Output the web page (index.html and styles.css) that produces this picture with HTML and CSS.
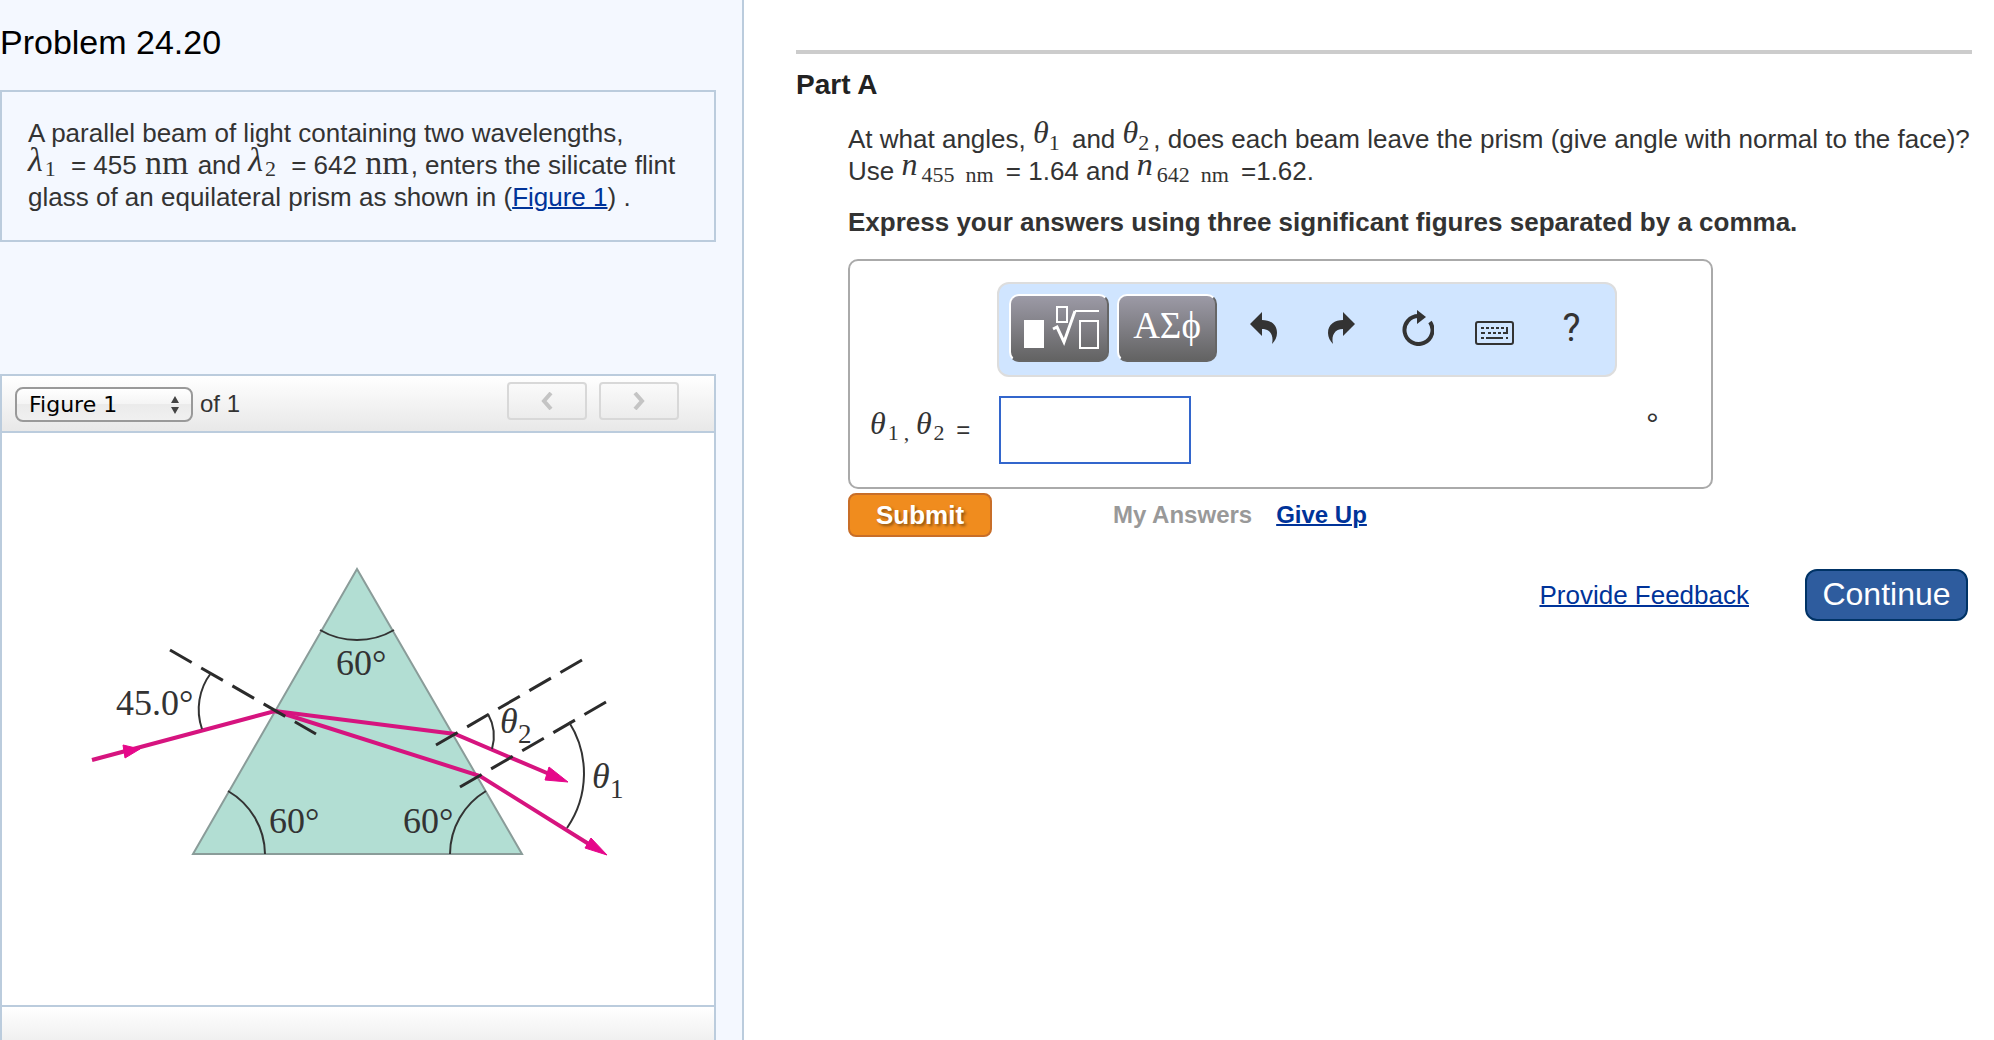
FILE: index.html
```html
<!DOCTYPE html>
<html lang="en">
<head>
  <meta charset="UTF-8">
  <meta name="viewport" content="width=device-width, initial-scale=1.0">
  <title>Problem 24.20</title>
  <link rel="stylesheet" href="styles.css">
</head>
<body>
  <div class="page">
    <aside class="sidebar">
      <h1 class="problem-title">Problem 24.20</h1>

      <div class="problem-text">
        A parallel beam of light containing two wavelengths,<br>
        <span class="math wide"><i class="lambda">λ</i><sub>1</sub></span> = 455 <span class="unit">nm</span> and
        <span class="math wide"><i class="lambda">λ</i><sub>2</sub></span> = 642 <span class="unit">nm</span>, enters the silicate flint
        glass of an equilateral prism as shown in (<a href="#figure">Figure 1</a>) .
      </div>

      <section class="figure" id="figure">
        <div class="figure-header">
          <div class="select-wrap">
            <select id="figureSelect" aria-label="Figure">
              <option>Figure 1</option>
            </select>
            <svg class="select-arrows" width="8" height="18" viewBox="0 0 8 18">
              <path d="M4 0 8 7H0ZM0 11H8L4 18Z" fill="#444"/>
            </svg>
          </div>
          <label for="figureSelect">of 1</label>
          <div class="figure-nav">
            <button type="button" aria-label="Previous figure">
              <svg width="14" height="18" viewBox="0 0 14 18"><path d="M11 1 4 9l7 8" fill="none" stroke="#c4c4c4" stroke-width="4"/></svg>
            </button>
            <button type="button" aria-label="Next figure">
              <svg width="14" height="18" viewBox="0 0 14 18"><path d="M3 1l7 8-7 8" fill="none" stroke="#c4c4c4" stroke-width="4"/></svg>
            </button>
          </div>
        </div>

        <div class="figure-body">
          <svg class="prism" viewBox="0 0 560 320">
            <path d="M279 10 444 295H115Z" fill="#b2ded3" stroke="#8a9c99" stroke-width="2"/>

            <!-- corner angles -->
            <g class="arc">
              <path d="M242 71A73 73 0 0 0 316 71"/>
              <path d="M150 232A74 74 0 0 1 187 295"/>
              <path d="M408 232A74 74 0 0 0 372 295"/>
            </g>

            <!-- light rays -->
            <g class="ray">
              <path d="M14 201 197 152 377 175 476 217"/>
              <path d="M197 152 402 217 514 287"/>
            </g>
            <g class="ray-head">
              <path d="M45 186 62 190 47 199Z"/>
              <path d="M471 208 490 223 467 221Z"/>
              <path d="M513 279 529 296 507 289Z"/>
            </g>

            <!-- normals -->
            <g class="normal">
              <path d="M92 91 238 175"/>
              <path d="M358 186 504 101"/>
              <path d="M382 228 528 143"/>
            </g>
            <g class="arc">
              <path d="M133 114A60 60 0 0 0 124 170"/>
              <path d="M410 155A46 46 0 0 1 414 190"/>
              <path d="M491 163A96 96 0 0 1 489 269"/>
            </g>

            <g class="figure-label">
              <text x="38" y="156">45.0°</text>
              <text x="258" y="116">60°</text>
              <text x="191" y="274">60°</text>
              <text x="325" y="274">60°</text>
              <text class="figure-theta" x="422" y="174">θ</text>
              <text class="figure-sub" x="440" y="184">2</text>
              <text class="figure-theta" x="514" y="229">θ</text>
              <text class="figure-sub" x="532" y="239">1</text>
            </g>
          </svg>
        </div>

        <div class="figure-footer"></div>
      </section>
    </aside>

    <main class="content">
      <h2 class="part-title">Part A</h2>

      <div class="part">
        <p class="question">
          At what angles, <span class="math"><i class="theta">θ</i><sub>1</sub></span> and <span class="math tight"><i class="theta">θ</i><sub>2</sub></span>, does each beam leave the prism (give angle with normal to the face)?<br>
          Use <span class="math"><i class="index">n</i><sub>455&nbsp; nm</sub></span> = 1.64 and <span class="math"><i class="index">n</i><sub>642&nbsp; nm</sub></span> =1.62.
        </p>
        <p class="instructions">Express your answers using three significant figures separated by a comma.</p>

        <form id="answerForm">
          <div class="answer-box">
            <div class="toolbar">
              <button type="button" class="key" aria-label="Templates">
                <svg width="96" height="64" viewBox="0 0 96 64">
                  <path d="M13 24h20v28H13z" fill="#fff"/>
                  <g fill="none" stroke="#fff" stroke-width="2">
                    <path d="M46 11h10v15H46zM69 25h18v27H69z"/>
                    <path d="M64 15h24"/>
                    <path d="M42 33 46 31 53 46 64 15" stroke-width="3"/>
                  </g>
                </svg>
              </button>
              <button type="button" class="key symbols">ΑΣϕ</button>
              <div class="tools">
                <button type="button" class="tool" aria-label="Undo">
                  <svg width="28" height="32" viewBox="0 0 28 32"><path d="M0 12 12 0V8C20 8 27 12 27 21C27 25 25 29 22 32C24 23 20 17 12 17V24Z" fill="#333"/></svg>
                </button>
                <button type="button" class="tool" aria-label="Redo">
                  <svg width="28" height="32" viewBox="0 0 28 32"><path d="M28 12 16 0V8C8 8 1 12 1 21C1 25 3 29 6 32C4 23 8 17 16 17V24Z" fill="#333"/></svg>
                </button>
                <button type="button" class="tool" aria-label="Reset">
                  <svg width="32" height="36" viewBox="0 0 32 36"><path d="M17 6A14 14 0 1 0 28 12" fill="none" stroke="#333" stroke-width="4"/><path d="M15 0 24 7 15 14Z" fill="#333"/></svg>
                </button>
                <button type="button" class="tool keyboard" aria-label="Keyboard shortcuts">
                  <svg width="40" height="24" viewBox="0 0 40 24">
                    <rect x="1" y="1" width="37" height="22" rx="2" fill="none" stroke="#333" stroke-width="2"/>
                    <path d="M6 6h3v2H6zM11 6h3v2h-3zM16 6h3v2h-3zM21 6h3v2h-3zM26 6h3v2h-3zM31 6h2v7h-5v-2h3zM6 11h4v2H6zM13 11h3v2h-3zM18 11h3v2h-3zM23 11h3v2h-3zM6 16h3v2H6zM11 16h17v2H11zM31 16h2v2h-2z" fill="#333"/>
                  </svg>
                </button>
                <button type="button" class="tool help">?</button>
              </div>
            </div>
            <label class="answer-label" for="answer">
              <span class="math"><i>θ</i><sub>1</sub></span><sub>,</sub>
              <span class="math"><i>θ</i><sub>2</sub></span> =
            </label>
            <input class="answer-input" id="answer" type="text" autocomplete="off">
            <span class="answer-unit">°</span>
          </div>

          <div class="actions">
            <button type="submit" class="submit">Submit</button>
            <span class="my-answers">My Answers</span>
            <a class="give-up" href="#">Give Up</a>
          </div>
        </form>

        <div class="bottom-nav">
          <a href="#">Provide Feedback</a>
          <button type="button" class="continue">Continue</button>
        </div>
      </div>
    </main>
  </div>
</body>
</html>
```

FILE: styles.css
```css
* {
  box-sizing: border-box;
}
body {
  margin: 0;
  font-family: "Liberation Sans", Arial, sans-serif;
  font-size: 26px;
  line-height: 32px;
  color: #333;
  background-color: #fff;
}
a {
  color: #039;
  text-decoration-thickness: 2px;
}
button {
  font-family: inherit;
  cursor: pointer;
}
.page {
  display: flex;
  min-height: 100vh;
}

/* Left column */
.sidebar {
  display: flex;
  flex-direction: column;
  flex: 0 0 744px;
  padding-right: 26px;
  background-color: #f4f8ff;
  border-right: 2px solid #bcd;
}
.problem-title {
  margin: 22px 0 28px;
  font-size: 34px;
  font-weight: normal;
  line-height: 40px;
  color: #000;
}
.problem-text {
  padding: 25px 26px 27px;
  border: 2px solid #bcd;
}

/* Math */
.math {
  margin-right: 5px;
  font-family: "Liberation Serif", "Times New Roman", serif;
  line-height: 0;
  white-space: nowrap;
}
.math i {
  font-size: 32px;
}
.math.tight {
  margin-right: 4px;
}
.math.wide {
  margin-right: 8px;
}
.math .lambda {
  margin-right: 2px;
  font-size: 34px;
  vertical-align: 3px;
}
.math .theta,
.math .index {
  vertical-align: 5px;
}
.math .index {
  margin-right: 4px;
}
sub {
  font-family: "Liberation Serif", "Times New Roman", serif;
  font-size: 22px;
  line-height: 0;
  vertical-align: -2px;
}
.unit {
  margin: 0 2px 0 1px;
  font-family: "Liberation Serif", "Times New Roman", serif;
  font-size: 34px;
  line-height: 0;
}

/* Figure */
.figure {
  display: flex;
  flex-direction: column;
  flex: 1;
  margin-top: 132px;
  border: 2px solid #bcd;
  border-bottom: none;
}
.figure-header {
  display: flex;
  align-items: center;
  gap: 7px;
  height: 57px;
  padding: 1px 35px 0 13px;
  font-size: 24px;
  background: linear-gradient(#fff, #e8e8e8);
  border-bottom: 2px solid #bcd;
}
.select-wrap {
  position: relative;
}
.select-wrap select {
  display: block;
  width: 178px;
  height: 35px;
  padding: 0 12px;
  font-family: "DejaVu Sans", sans-serif;
  font-size: 22px;
  color: #000;
  background: linear-gradient(#fff, #f4f4f4 50%, #ebebeb 50%, #f0f0f0);
  border: 2px solid #999;
  border-radius: 8px;
  appearance: none;
}
.select-arrows {
  position: absolute;
  top: 9px;
  right: 14px;
  pointer-events: none;
}
.figure-nav {
  display: flex;
  gap: 12px;
  margin: 0 0 6px auto;
}
.figure-nav button {
  display: flex;
  align-items: center;
  justify-content: center;
  width: 80px;
  height: 38px;
  background: linear-gradient(#fafafa, #ececec);
  border: 2px solid #d8d8d8;
  border-radius: 4px;
}
.figure-body {
  display: flex;
  flex: 1;
  align-items: center;
  justify-content: center;
  background-color: #fff;
}
.figure-footer {
  height: 35px;
  background: linear-gradient(#fff, #f0f0f0);
  border-top: 2px solid #bcd;
}
.prism {
  width: 560px;
  max-width: 100%;
}
.arc path {
  fill: none;
  stroke: #333;
  stroke-width: 2;
}
.ray path {
  fill: none;
  stroke: #d6147f;
  stroke-width: 4;
}
.ray-head path {
  fill: #e6078a;
  stroke: #e6078a;
}
.normal path {
  fill: none;
  stroke: #2b2b2b;
  stroke-width: 3;
  stroke-dasharray: 25 11;
}
.figure-label text {
  font-family: "Liberation Serif", "Times New Roman", serif;
  font-size: 36px;
  fill: #333;
}
.figure-label .figure-theta {
  font-style: italic;
}
.figure-label .figure-sub {
  font-size: 27px;
}

/* Right column */
.content {
  flex: 1;
  margin: 50px 22px 0 52px;
  border-top: 4px solid #ccc;
}
.part-title {
  margin: 15px 0 0;
  font-size: 28px;
  line-height: 32px;
  color: #222;
}
.part {
  margin-left: 52px;
}
.question {
  margin: 22px 0 19px;
}
.instructions {
  margin: 0 0 21px;
  font-weight: bold;
}
.answer-box {
  display: grid;
  grid-template-columns: 127px auto 1fr;
  align-items: center;
  row-gap: 19px;
  width: 77%;
  padding: 21px 20px 23px;
  border: 2px solid #aaa;
  border-radius: 10px;
}
.toolbar {
  display: flex;
  grid-column: 2;
  gap: 8px;
  padding: 10px 5px 13px 10px;
  background-color: #d0e5ff;
  border: 2px solid #ddd;
  border-radius: 12px;
}
.key {
  width: 100px;
  height: 68px;
  padding: 0;
  color: #fff;
  background: linear-gradient(#9c9aa6, #636363);
  border: 2px solid;
  border-color: #fff #666 #666 #fff;
  border-radius: 10px;
}
.key svg {
  display: block;
}
.symbols {
  padding-bottom: 6px;
  font-family: "Liberation Serif", "Times New Roman", serif;
  font-size: 37px;
}
.tools {
  display: flex;
}
.tool {
  display: flex;
  align-items: center;
  justify-content: center;
  width: 77px;
  padding: 0;
  color: #333;
  background: none;
  border: none;
}
.keyboard {
  padding-top: 10px;
}
.help {
  font-family: Roboto, sans-serif;
  font-size: 38px;
}
.answer-label {
  grid-column: 1;
  font-size: 24px;
  white-space: nowrap;
}
.answer-label i {
  margin-right: 2px;
  vertical-align: 4px;
}
.answer-input {
  width: 192px;
  height: 68px;
  margin-left: 2px;
  padding: 0 10px;
  font-size: 26px;
  border: 2px solid #36c;
}
.answer-unit {
  margin: 0 0 12px 29px;
  font-size: 32px;
}
.actions {
  display: flex;
  align-items: center;
  margin-top: 4px;
  font-size: 24px;
  font-weight: bold;
}
.submit {
  width: 144px;
  height: 44px;
  padding: 0;
  font-size: 26px;
  font-weight: bold;
  color: #fff;
  text-shadow: 2px 2px 3px rgba(0, 0, 0, 0.4);
  background-color: #f08c1e;
  border: 2px solid #c86e28;
  border-radius: 8px;
}
.my-answers {
  margin-left: 121px;
  color: #999;
}
.give-up {
  margin-left: 24px;
}
.bottom-nav {
  display: flex;
  align-items: center;
  justify-content: flex-end;
  gap: 56px;
  margin: 32px 4px 0 0;
}
.continue {
  width: 163px;
  height: 52px;
  padding: 0 0 2px;
  font-size: 32px;
  color: #fff;
  background-color: #2e5c9e;
  border: 2px solid #036;
  border-radius: 12px;
}
```
